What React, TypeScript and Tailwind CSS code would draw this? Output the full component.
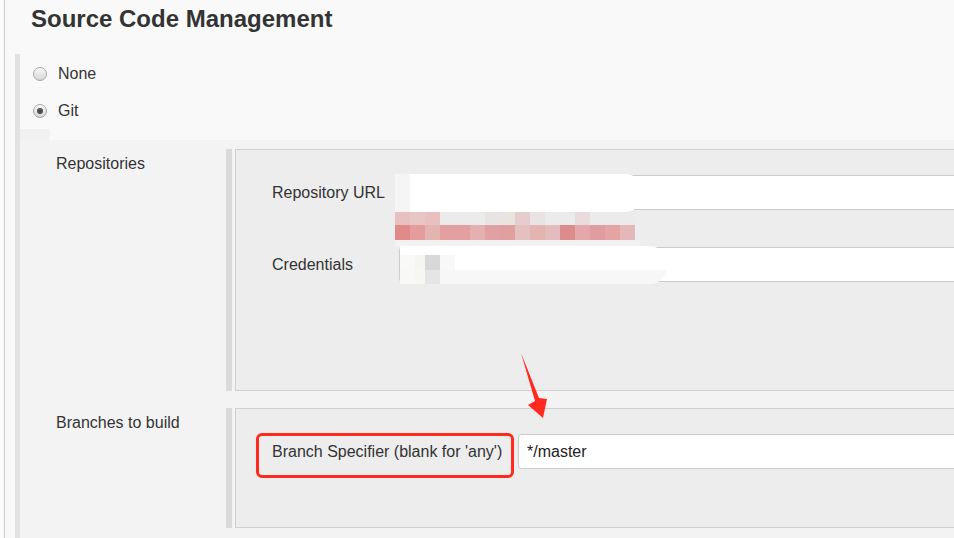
import React, { FC } from "react"

const font = "font-['Liberation_Sans',Arial,sans-serif]"

const mosaicTop = [
  "#e8c0c0", "#e8c6c6", "#e8c0c0", "#ebebeb", "#ebebeb", "#ebebeb", "#e8e4e4", "#e8e4df",
  "#e6cccc", "#e8e4e4", "#ebebeb", "#ebebeb", "#e8dcdc", "#ebebeb", "#ebebeb", "#ebebeb",
]
const mosaicBottom = [
  "#e08a8a", "#e49c9c", "#e4b4b0", "#e4a0a0", "#e4a0a0", "#e4b0b0", "#e0a0a4", "#e0a0a0",
  "#e4c0c0", "#e4b4b0", "#e4bcc0", "#dc8c8c", "#e4a8ac", "#e09ca0", "#e4a4a4", "#e4b8b8",
]

type RadioProps = {
  label: string
  checked?: boolean
}

const Radio: FC<RadioProps> = ({ label, checked }) => (
  <div className="flex h-[37px] items-center gap-[11px] pl-[13px]">
    <span className="flex h-[14px] w-[14px] items-center justify-center rounded-full border border-[#a3a3a3] bg-linear-to-b from-[#fbfbfb] to-[#d6d6d6]">
      {checked && <span className="h-[6px] w-[6px] rounded-full bg-[#505050]" />}
    </span>
    <span className="text-[16px] text-[#333]">{label}</span>
  </div>
)

const TextBox: FC<{ value?: string }> = ({ value }) => (
  <div className="flex h-[35px] flex-1 items-center rounded-[3px] border border-[#cccccc] bg-white pl-[8px] text-[16px] text-[#222]">
    {value}
  </div>
)

const Mosaic: FC<{ cells: string[] }> = ({ cells }) => (
  <div className="flex h-[15px]">
    {cells.map((c, i) => (
      <span key={i} className="h-full w-[15px]" style={{ backgroundColor: c }} />
    ))}
  </div>
)

export default function App() {
  return (
    <div className={`relative flex h-[538px] w-[954px] overflow-hidden bg-[#fbfbfb] ${font}`}>
      <div className="w-[5px] shrink-0 border-r border-[#cfcfcf]" />
      <div className="flex w-[1010px] shrink-0 flex-col bg-[#f9f9f9]">
        <h1 className="h-[54px] pl-[26px] pt-[5px] text-[24px] font-bold leading-[28px] text-[#333]">
          Source Code Management
        </h1>

        <div className="flex flex-1 pl-[10px]">
          <div className="w-[5px] bg-[#e2e2e2]" />
          <div className="flex flex-1 flex-col pt-[1px]">
            <Radio label="None" />
            <Radio label="Git" checked />
            <div className="h-[11px] w-[30px] bg-[#f1f1f1]" />

            <div className="flex flex-1 flex-col gap-[17px] bg-[#f3f3f3] pt-[9px]">
              {/* Repositories */}
              <div className="flex">
                <div className="w-[206px] pl-[36px] pt-[6px] text-[16px] leading-[18px] text-[#333]">
                  Repositories
                </div>
                <div className="w-[6px] bg-[#dadada]" />
                <div className="w-[3px]" />
                <div className="relative h-[242px] flex-1 border border-[#d0d0d0] bg-[#ededed] pl-[36px] pt-[25px]">
                  <div className="flex items-center">
                    <span className="w-[123px] text-[16px] text-[#333]">Repository URL</span>
                    <TextBox />
                  </div>
                  <div className="pl-[123px]">
                    <Mosaic cells={mosaicTop} />
                    <Mosaic cells={mosaicBottom} />
                    <div className="h-[7px] w-[245px] bg-[#f2f2f2]" />
                  </div>
                  <div className="flex items-center">
                    <span className="w-[127px] text-[16px] text-[#333]">Credentials</span>
                    <TextBox />
                  </div>

                  {/* redaction blur over the url field */}
                  <div className="absolute left-[159px] top-[24px] flex h-[38px] w-[248px] overflow-hidden rounded-r-[18px] bg-white">
                    <span className="h-full w-[15px] bg-[#f5f5f5]" />
                  </div>
                  {/* redaction blur over credentials */}
                  <div className="absolute left-[164px] top-[96px] flex h-[38px] w-[268px] flex-col overflow-hidden rounded-r-[20px] bg-white">
                    <div className="flex h-[9px]" />
                    <div className="flex h-[15px]">
                      <span className="w-[15px] bg-[#f9f9f7]" />
                      <span className="w-[10px] bg-[#f5f5f2]" />
                      <span className="w-[15px] bg-[#d8d8d8]" />
                      <span className="w-[15px] bg-[#f8f8f8]" />
                    </div>
                    <div className="flex h-[14px] bg-[#f7f7f7]">
                      <span className="w-[15px] bg-[#f8f8f6]" />
                      <span className="w-[10px] bg-[#f6f6f3]" />
                      <span className="w-[15px] bg-[#e5e5e5]" />
                    </div>
                  </div>
                </div>
              </div>

              {/* Branches to build */}
              <div className="flex">
                <div className="w-[206px] pl-[36px] pt-[6px] text-[16px] leading-[18px] text-[#333]">
                  Branches to build
                </div>
                <div className="w-[6px] bg-[#dadada]" />
                <div className="w-[3px]" />
                <div className="relative h-[120px] flex-1 border border-[#d0d0d0] bg-[#ededed] pl-[36px] pt-[25px]">
                  <div className="flex items-center">
                    <span className="w-[246px] text-[16px] text-[#333]">Branch Specifier (blank for 'any')</span>
                    <TextBox value="*/master" />
                  </div>
                  <div className="absolute left-[20px] top-[24px] h-[45px] w-[258px] rounded-[6px] border-[3px] border-[#ff2a1f]" />
                </div>
              </div>
            </div>
          </div>
        </div>
      </div>

      {/* annotation arrow */}
      <svg className="absolute left-[515px] top-[350px]" width="40" height="72" viewBox="0 0 40 72">
        <polygon points="6,3 24,48 32,49 28,68 13,55 20,51" fill="#ff2a1f" />
      </svg>
    </div>
  )
}
